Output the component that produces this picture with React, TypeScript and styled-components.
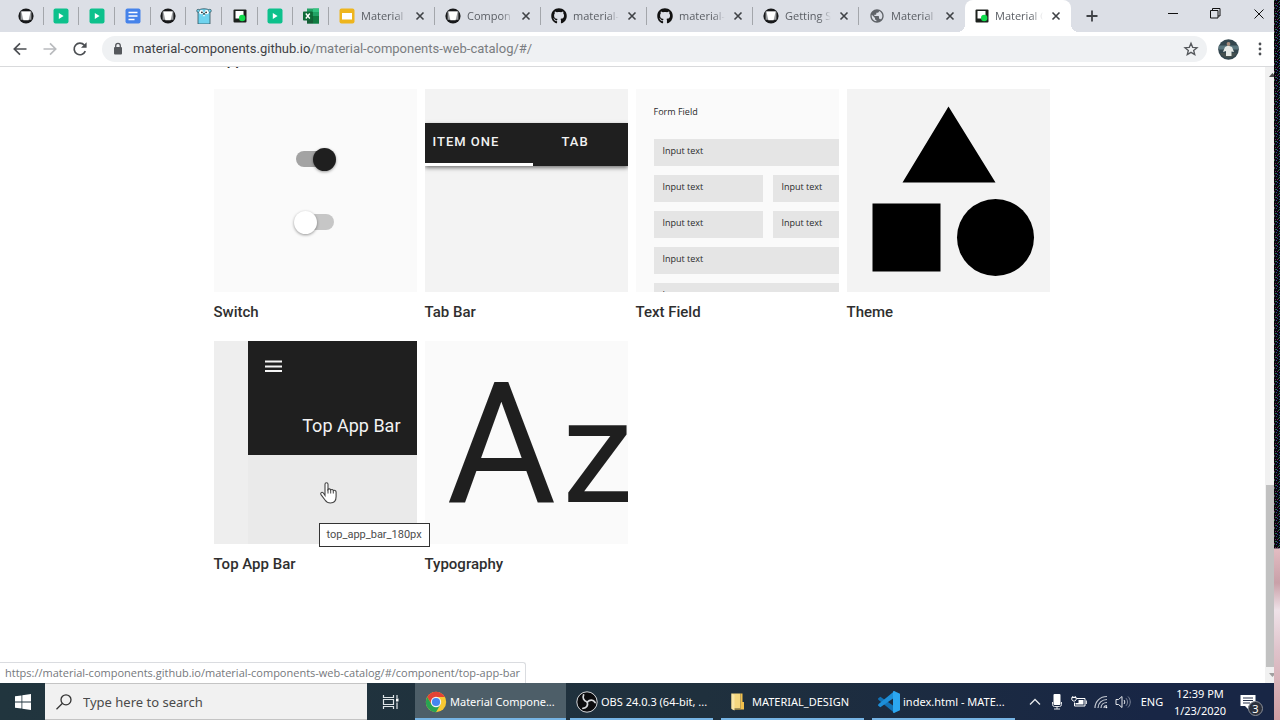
import React from "react";
import styled, { createGlobalStyle, css } from "styled-components";
import { FaGithub } from "react-icons/fa";
import { MdPublic } from "react-icons/md";

const uiFont = '"Noto Sans", "Open Sans", sans-serif';
const narrowFont = '"Open Sans", "Noto Sans", sans-serif';
const pageFont = 'Roboto, "Liberation Sans", sans-serif';

const GlobalStyle = createGlobalStyle`
  *, *::before, *::after { box-sizing: border-box; }
  html, body { margin: 0; height: 100%; }
  #root { height: 100%; }
  body { font-family: ${uiFont}; color: #202124; background: #fff; overflow: hidden; }
  button { font: inherit; color: inherit; background: none; border: 0; padding: 0; margin: 0; }
  a { color: inherit; text-decoration: none; }
  svg { display: block; flex: none; }
`;

const Desktop = styled.div`
  position: relative;
  display: flex;
  flex-direction: column;
  height: 100vh;
  overflow: hidden;
`;

/* ---------- tab strip ---------- */

const TabStrip = styled.nav`
  display: flex;
  flex: none;
  height: 32px;
  padding-left: 8px;
  background: #dcdfe6;
`;

const PinnedTabs = styled.div`
  display: grid;
  grid-template-columns: repeat(9, 1fr);
  flex: 0 0 321px;
`;

const separator = css`
  &::after {
    content: "";
    position: absolute;
    right: 0;
    top: 7px;
    width: 1px;
    height: 18px;
    background: #a3a6ab;
  }
`;

const PinnedTab = styled.button`
  position: relative;
  display: flex;
  align-items: center;
  justify-content: center;
  ${separator}
`;

const Tab = styled.div<{ $active?: boolean; $plain?: boolean }>`
  position: relative;
  display: flex;
  align-items: center;
  flex: 0 1 106px;
  min-width: 0;
  padding: 0 10px;
  ${(p) => !p.$active && !p.$plain && separator}
  ${(p) =>
    p.$active &&
    css`
      background: #fff;
      border-radius: 8px 8px 0 0;
      &::before,
      &::after {
        content: "";
        position: absolute;
        bottom: 0;
        width: 8px;
        height: 8px;
      }
      &::before {
        left: -8px;
        background: radial-gradient(circle at 0 0, transparent 8px, #fff 8px);
      }
      &::after {
        right: -8px;
        background: radial-gradient(circle at 100% 0, transparent 8px, #fff 8px);
      }
    `}
`;

const TabTitle = styled.button`
  display: flex;
  align-items: center;
  flex: 1;
  min-width: 0;
  gap: 6px;
  text-align: left;
`;

const TabText = styled.span`
  flex: 1;
  min-width: 0;
  overflow: hidden;
  white-space: nowrap;
  font-family: ${narrowFont};
  font-size: 11px;
  line-height: 16px;
  color: #5a5e64;
  mask-image: linear-gradient(90deg, #000 75%, transparent 100%);
`;

const TabClose = styled.button`
  display: flex;
  margin-left: 8px;
`;

const NewTab = styled.button`
  display: flex;
  align-items: center;
  margin-left: 14px;
`;

const WindowControls = styled.div`
  display: flex;
  margin-left: auto;
`;

const WindowButton = styled.button`
  display: flex;
  justify-content: center;
  width: 43px;
  height: 27px;
  align-items: center;
`;

/* ---------- toolbar ---------- */

const Toolbar = styled.header`
  display: flex;
  align-items: center;
  flex: none;
  height: 35px;
  padding: 0 18px 0 12px;
  background: #fff;
  border-bottom: 1px solid #d9dadc;
`;

const ToolButton = styled.button`
  display: flex;
  width: 16px;
  margin-right: 14px;
`;

const Omnibox = styled.label`
  display: flex;
  align-items: center;
  flex: 1;
  height: 26px;
  padding: 0 8px 0 10px;
  border-radius: 13px;
  background: #eff1f3;
`;

const AddressWrap = styled.span`
  position: relative;
  flex: 1;
  margin-left: 9px;
  font-family: ${pageFont};
  font-size: 13px;
  line-height: 20px;
  color: #7a7d81;
`;

const Host = styled.span`
  color: #3f4246;
`;

const AddressInput = styled.input`
  position: absolute;
  inset: 0;
  width: 100%;
  padding: 0;
  border: 0;
  outline: 0;
  background: transparent;
  font: inherit;
`;

const Avatar = styled.button`
  margin: 0 19px 0 11px;
`;

/* ---------- page ---------- */

const Viewport = styled.div`
  position: relative;
  display: flex;
  flex: 1;
  min-height: 0;
`;

const Page = styled.main`
  display: flex;
  flex-direction: column;
  justify-content: flex-end;
  flex: 1;
  overflow: hidden;
  padding: 0 26px 107px 24px;
  font-family: ${pageFont};
`;

const Catalog = styled.div`
  width: 100%;
  max-width: 836px;
  margin: 0 auto;
`;

const Grid = styled.div`
  display: grid;
  grid-template-columns: repeat(4, 1fr);
  gap: 17px 8px;
`;

const Caption = styled.span`
  display: block;
  font-size: 15px;
  font-weight: 500;
  line-height: 24px;
  color: #2f2f2f;
`;

const PreviousCaption = styled.a`
  display: block;
  margin-bottom: 17px;
`;

const CatalogItem = styled.a`
  position: relative;
  display: flex;
  flex-direction: column;
  gap: 8px;
  min-width: 0;
`;

const Tile = styled.span<{ $tone: string }>`
  display: flex;
  flex-direction: column;
  aspect-ratio: 1;
  overflow: hidden;
  background: ${(p) => p.$tone};
`;

const SwitchArt = styled.span`
  display: flex;
  flex-direction: column;
  align-items: center;
  justify-content: center;
  flex: 1;
  gap: 47px;
`;

const SwitchTrack = styled.span<{ $on?: boolean }>`
  display: flex;
  align-items: center;
  justify-content: ${(p) => (p.$on ? "flex-end" : "flex-start")};
  width: 38px;
  height: 16px;
  border-radius: 8px;
  background: ${(p) => (p.$on ? "#a3a3a3" : "#c6c6c6")};
`;

const SwitchKnob = styled.span<{ $on?: boolean }>`
  width: 23px;
  height: 23px;
  margin: 0 -2px;
  border-radius: 50%;
  background: ${(p) => (p.$on ? "#1f1f1f" : "#fff")};
  box-shadow: 0 1px 3px rgba(0, 0, 0, 0.4);
`;

const TabBarArt = styled.span`
  display: grid;
  grid-template-columns: 108px 1fr;
  height: 43px;
  margin-top: 34px;
  background: #1f1f1f;
  color: #f2f2f2;
  font-size: 13px;
  font-weight: 500;
  letter-spacing: 1px;
  line-height: 38px;
  box-shadow: 0 2px 4px rgba(0, 0, 0, 0.5);
`;

const TabBarItem = styled.span<{ $selected?: boolean }>`
  padding-left: ${(p) => (p.$selected ? "8px" : "29px")};
  border-bottom: ${(p) => (p.$selected ? "3px solid #fff" : "0")};
`;

const FormArt = styled.span`
  display: grid;
  grid-template-columns: 109px 1fr;
  grid-auto-rows: 27px;
  gap: 9px 10px;
  padding: 14px 0 0 18px;
  font-family: ${narrowFont};
  font-size: 9px;
  color: #2b2b2b;
`;

const FormTitle = styled.span`
  grid-column: 1 / -1;
  line-height: 18px;
`;

const FormField = styled.span<{ $wide?: boolean }>`
  grid-column: ${(p) => (p.$wide ? "1 / -1" : "auto")};
  padding-left: 9px;
  line-height: 23px;
  background: #e5e5e5;
`;

const AppBarArt = styled.span`
  display: flex;
  flex-direction: column;
  flex: 1;
  margin-left: 34px;
  background: #eaeaea;
`;

const AppBar = styled.span`
  display: flex;
  flex-direction: column;
  justify-content: space-between;
  height: 114px;
  padding: 16px 16px 17px;
  background: #1f1f1f;
  color: #f2f2f2;
  font-size: 18px;
  line-height: 24px;
`;

const AppBarTitle = styled.span`
  text-align: right;
`;

const TypeArt = styled.span`
  padding: 4px 0 0 22px;
  font-size: 168px;
  line-height: 200px;
  white-space: nowrap;
  color: #1f1f1f;
`;

const SmallLetter = styled.span`
  margin-left: 6px;
  font-size: 144px;
  line-height: 1;
`;

const Pointer = styled.svg`
  position: absolute;
  left: 105px;
  top: 140px;
`;

const Tooltip = styled.span`
  position: absolute;
  left: 105px;
  top: 182px;
  z-index: 1;
  padding: 0 7px;
  border: 1px solid #333;
  background: #fff;
  font-family: ${pageFont};
  font-size: 11px;
  line-height: 22px;
  white-space: nowrap;
  color: #4d4d4d;
`;

const Scrollbar = styled.div`
  display: flex;
  flex-direction: column;
  align-items: center;
  width: 15px;
  background: #f1f1f1;
`;

const ScrollArrow = styled.span`
  display: flex;
  align-items: center;
  justify-content: center;
  height: 16px;
`;

const ScrollSpace = styled.span`
  flex: 402 0 0;
`;

const ScrollThumb = styled.span`
  flex: 182 0 0;
  width: 13px;
  background: #c1c1c1;
`;

const StatusBubble = styled.div`
  position: absolute;
  left: 0;
  bottom: 0;
  height: 21px;
  padding: 0 5px;
  border: 1px solid #dadce0;
  border-width: 1px 1px 0 0;
  border-radius: 0 3px 0 0;
  background: #fff;
  font-family: ${narrowFont};
  font-size: 11px;
  line-height: 20px;
  color: #75787c;
`;

/* ---------- taskbar ---------- */

const Taskbar = styled.footer`
  display: flex;
  flex: none;
  height: 37px;
  background: linear-gradient(90deg, #21353e, #1f303d 55%, #182645 90%);
  color: #fff;
  font-size: 11px;
`;

const StartButton = styled.button`
  display: flex;
  align-items: center;
  justify-content: center;
  width: 45px;
`;

const SearchBox = styled.label`
  display: flex;
  align-items: center;
  flex: 0 1 322px;
  gap: 11px;
  padding-left: 11px;
  border: 1px solid #c4c4c4;
  border-width: 1px 0;
  background: #f1f1f1;
`;

const SearchInput = styled.input`
  flex: 1;
  min-width: 0;
  padding: 0;
  border: 0;
  outline: 0;
  background: transparent;
  font-family: ${uiFont};
  font-size: 13px;
  color: #4a4a4a;
  &::placeholder {
    color: #4a4a4a;
    opacity: 1;
  }
`;

const TaskView = styled.button`
  display: flex;
  align-items: center;
  justify-content: center;
  width: 48px;
`;

const TaskButton = styled.button<{ $active?: boolean }>`
  display: flex;
  align-items: center;
  flex: 0 1 151px;
  position: relative;
  gap: 3px;
  min-width: 0;
  padding: 0 12px 0 10px;
  white-space: nowrap;
  background: ${(p) => (p.$active ? "#4d5e68" : "transparent")};
  &::after {
    content: "";
    position: absolute;
    bottom: 0;
    left: ${(p) => (p.$active ? "0" : "4px")};
    right: ${(p) => (p.$active ? "0" : "4px")};
    height: 2px;
    background: #76b4e4;
  }
`;

const Tray = styled.div`
  display: flex;
  align-items: center;
  margin-left: auto;
`;

const TrayButton = styled.button`
  display: flex;
  align-items: center;
  justify-content: center;
  width: 22px;
  height: 100%;
`;

const Language = styled.button`
  width: 36px;
`;

const Clock = styled.time`
  width: 60px;
  text-align: center;
  line-height: 17px;
`;

const Notifications = styled.button`
  position: relative;
  display: flex;
  align-items: center;
  justify-content: center;
  width: 36px;
  height: 100%;
  margin-right: 14px;
`;

const Badge = styled.span`
  position: absolute;
  right: 3px;
  bottom: 4px;
  width: 15px;
  height: 15px;
  border: 1px solid #8b8f98;
  border-radius: 50%;
  background: #2b303c;
  font-size: 11px;
  line-height: 13px;
  text-align: center;
`;

const WallpaperEdge = styled.svg`
  position: absolute;
  right: 0;
  top: 0;
  width: 6px;
  height: 100%;
`;

/* ---------- icons ---------- */

const MaterialDisc = () => (
  <svg width="16" height="16" viewBox="0 0 16 16">
    <circle cx="8" cy="8" r="7.6" fill="#17181a" />
    <path d="M2.6 3.4h10.8v8.4H2.6z" fill="#9b9da0" />
    <path d="M3.4 3.4h9.2l-2 8.8H5.4z" fill="#fff" />
  </svg>
);

const PlayIcon = () => (
  <svg width="16" height="16" viewBox="0 0 16 16">
    <rect x=".5" y=".5" width="15" height="15" rx="2" fill="#0dc18c" />
    <path d="M5.8 5v6l4.8-3z" fill="#fff" />
  </svg>
);

const DocsIcon = () => (
  <svg width="16" height="16" viewBox="0 0 16 16">
    <rect x=".5" y=".5" width="15" height="15" rx="2" fill="#4683ea" />
    <path d="M3.5 4.5h9M3.5 8h9M3.5 11.5h6" stroke="#fff" strokeWidth="1.5" />
  </svg>
);

const GopherIcon = () => (
  <svg width="16" height="16" viewBox="0 0 16 16">
    <path d="M2 16V5C2 2 4 .8 8 .8S14 2 14 5v11z" fill="#6fd3ee" stroke="#31525c" strokeWidth=".8" />
    <circle cx="2.2" cy="2.8" r="1.5" fill="#6fd3ee" stroke="#31525c" strokeWidth=".7" />
    <circle cx="13.8" cy="2.8" r="1.5" fill="#6fd3ee" stroke="#31525c" strokeWidth=".7" />
    <circle cx="5.3" cy="4.2" r="2.1" fill="#fff" />
    <circle cx="10.7" cy="4.2" r="2.1" fill="#fff" />
    <circle cx="5.9" cy="4.3" r=".9" fill="#222" />
    <circle cx="10.1" cy="4.3" r=".9" fill="#222" />
    <ellipse cx="8" cy="6" rx="1.2" ry=".8" fill="#222" />
    <path d="M7.2 6.8h1.6v1.5H7.2z" fill="#fff" />
  </svg>
);

const CatalogIcon = () => (
  <svg width="14" height="14" viewBox="0 0 14 14">
    <rect x=".5" y=".5" width="13" height="13" rx="1" fill="#1c211d" />
    <rect x="2.5" y="2" width="8" height="7.5" fill="#fff" />
    <circle cx="9.2" cy="9" r="3.2" fill="#10dc4c" />
  </svg>
);

const ExcelIcon = () => (
  <svg width="16" height="16" viewBox="0 0 16 16">
    <path d="M4 .5h12v15H4z" fill="#23a366" />
    <path d="M4 8h6v7.5H4z" fill="#185c37" />
    <path d="M10 8h6v7.5h-6zM4 4h6v4H4z" fill="#107c41" />
    <path d="M10 .5h6V4h-6z" fill="#33c481" />
    <rect y="3.5" width="9.5" height="9" rx=".8" fill="#0f6b38" />
    <path d="M2.8 5.5l4 5M6.8 5.5l-4 5" stroke="#fff" strokeWidth="1.4" />
  </svg>
);

const SlidesIcon = () => (
  <svg width="16" height="16" viewBox="0 0 16 16">
    <rect x=".5" y=".5" width="15" height="15" rx="2" fill="#eeb51d" />
    <path d="M3 5h10v6.5H3z" fill="#fff" />
  </svg>
);

const CloseIcon = () => (
  <svg width="10" height="10" viewBox="0 0 10 10">
    <path d="M1.5 1.5l7 7M8.5 1.5l-7 7" stroke="#3f4246" strokeWidth="1.6" />
  </svg>
);

const ChromeIcon = () => (
  <svg width="22" height="22" viewBox="0 0 22 22">
    <circle cx="11" cy="11" r="10.2" fill="#f8c932" />
    <path d="M2.2 5.9A10.2 10.2 0 0 1 19.8 5.9H11L6.6 13.6z" fill="#e34335" />
    <path d="M2.2 5.9A10.2 10.2 0 0 0 11 21.2L15.4 13.5 11 11 6.6 13.5z" fill="#28a452" />
    <circle cx="11" cy="11" r="5.2" fill="#f4f4f4" />
    <circle cx="11" cy="11" r="4.1" fill="#4585ef" />
  </svg>
);

const ObsIcon = () => (
  <svg width="22" height="22" viewBox="0 0 22 22">
    <circle cx="11" cy="11" r="10.2" fill="#0c0c0e" stroke="#d5d7da" strokeWidth="1" />
    <g fill="none" stroke="#d5d7da" strokeWidth="1.7" strokeLinecap="round">
      <path d="M11.3 11C7.6 10 6.3 7 7.6 3.9" />
      <path d="M11.3 11c2.7-2.7 6-2.4 7.8.5" />
      <path d="M11.3 11c1 3.7-.9 6.3-4.4 6.4" />
    </g>
  </svg>
);

const FolderIcon = () => (
  <svg width="22" height="22" viewBox="0 0 22 22">
    <path d="M4.5 2.5h9v15h-9z" fill="#f5d77f" />
    <path d="M13.5 2.5h2V11H17v7.5H6.5l-2-.8h9z" fill="#f0bf4c" />
    <path d="M4.5 2.5l3 1.5v15.5l-3-1.5z" fill="#fae6a5" />
  </svg>
);

const CodeIcon = () => (
  <svg width="22" height="22" viewBox="0 0 22 22">
    <path d="M0 7.5l2.3-1.8L16.5 15.5V22L.3 8.8z" fill="#1272b5" />
    <path d="M0 14.5l2.3 1.8L16.5 6.5V0L.3 13.2z" fill="#1d8fd8" />
    <path d="M16 0l6 2.7v16.6L16 22l-1-.5V.5z" fill="#2ba7f1" />
  </svg>
);

const pinned = [
  { name: "Material", icon: <MaterialDisc /> },
  { name: "Video", icon: <PlayIcon /> },
  { name: "Video", icon: <PlayIcon /> },
  { name: "Docs", icon: <DocsIcon /> },
  { name: "Material", icon: <MaterialDisc /> },
  { name: "Go", icon: <GopherIcon /> },
  { name: "Catalog", icon: <CatalogIcon /> },
  { name: "Video", icon: <PlayIcon /> },
  { name: "Excel", icon: <ExcelIcon /> },
];

const tabs = [
  { title: "Material D", icon: <SlidesIcon /> },
  { title: "Compon", icon: <MaterialDisc /> },
  { title: "material-", icon: <FaGithub size={16} color="#111" /> },
  { title: "material-", icon: <FaGithub size={16} color="#111" /> },
  { title: "Getting S", icon: <MaterialDisc /> },
  { title: "Material", icon: <MdPublic size={16} color="#5f6368" /> },
  { title: "Material C", icon: <CatalogIcon /> },
];

const tasks = [
  { title: "Material Compone...", icon: <ChromeIcon /> },
  { title: "OBS 24.0.3 (64-bit, ...", icon: <ObsIcon /> },
  { title: "MATERIAL_DESIGN", icon: <FolderIcon /> },
  { title: "index.html - MATE...", icon: <CodeIcon /> },
];

function BrowserTabs() {
  return (
    <TabStrip>
      <PinnedTabs>
        {pinned.map((tab, i) => (
          <PinnedTab key={i} aria-label={tab.name}>
            {tab.icon}
          </PinnedTab>
        ))}
      </PinnedTabs>
      {tabs.map((tab, i) => (
        <Tab key={i} $active={i === tabs.length - 1} $plain={i === tabs.length - 2}>
          <TabTitle>
            {tab.icon}
            <TabText>{tab.title}</TabText>
          </TabTitle>
          <TabClose aria-label="Close tab">
            <CloseIcon />
          </TabClose>
        </Tab>
      ))}
      <NewTab aria-label="New tab">
        <svg width="14" height="14" viewBox="0 0 14 14">
          <path d="M7 1.5v11M1.5 7h11" stroke="#3f4246" strokeWidth="1.8" />
        </svg>
      </NewTab>
      <WindowControls>
        <WindowButton aria-label="Minimize">
          <svg width="10" height="10" viewBox="0 0 10 10">
            <path d="M0 4.5h10" stroke="#111" />
          </svg>
        </WindowButton>
        <WindowButton aria-label="Restore">
          <svg width="11" height="11" viewBox="0 0 11 11" fill="none" stroke="#111">
            <path d="M.5 2.5H8V10H.5zM2.5 2.5v-2H10V8H8" />
          </svg>
        </WindowButton>
        <WindowButton aria-label="Close">
          <svg width="10" height="10" viewBox="0 0 10 10">
            <path d="M.5.5l9 9M9.5.5l-9 9" stroke="#111" />
          </svg>
        </WindowButton>
      </WindowControls>
    </TabStrip>
  );
}

function BrowserToolbar() {
  return (
    <Toolbar>
      <ToolButton aria-label="Back">
        <svg width="16" height="16" viewBox="0 0 16 16" fill="none" stroke="#4b4e52" strokeWidth="1.7">
          <path d="M14.5 8H3M8 2.3L2.3 8 8 13.7" />
        </svg>
      </ToolButton>
      <ToolButton aria-label="Forward">
        <svg width="16" height="16" viewBox="0 0 16 16" fill="none" stroke="#b9bbbe" strokeWidth="1.7">
          <path d="M1.5 8H13M8 2.3L13.7 8 8 13.7" />
        </svg>
      </ToolButton>
      <ToolButton aria-label="Reload">
        <svg width="16" height="16" viewBox="0 0 16 16">
          <path d="M13.3 10.2A5.8 5.8 0 1 1 12.3 4.1" fill="none" stroke="#4b4e52" strokeWidth="1.7" />
          <path d="M14.6 1.2v5.6H9z" fill="#4b4e52" />
        </svg>
      </ToolButton>
      <Omnibox>
        <svg width="12" height="14" viewBox="0 0 12 14">
          <rect x="2" y="5" width="8" height="7.5" rx="1" fill="#55585c" />
          <path d="M3.7 5.5V3.7a2.3 2.3 0 0 1 4.6 0v1.8" fill="none" stroke="#55585c" strokeWidth="1.3" />
        </svg>
        <AddressWrap>
          <Host>material-components.github.io</Host>/material-components-web-catalog/#/
          <AddressInput aria-label="Address" />
        </AddressWrap>
        <svg width="16" height="16" viewBox="0 0 24 24" fill="none" stroke="#55585c" strokeWidth="2">
          <path d="M12 3.5l2.5 6 6.5.5-5 4.2 1.6 6.3L12 17l-5.6 3.500L8 14.200 3 10l6.500-.5z" />
        </svg>
      </Omnibox>
      <Avatar aria-label="Profile">
        <svg width="21" height="21" viewBox="0 0 21 21">
          <circle cx="10.5" cy="10.5" r="10.3" fill="#33464e" />
          <path d="M1 6.5h19l.5 4H.5z" fill="#5a777f" />
          <path d="M2 14h17a10 10 0 0 1-17 0z" fill="#46504f" />
          <path d="M7 8l3-1.5 4 1.5 2 5-2.5-.5V17H8v-5l-3 1z" fill="#e5e9e6" />
          <circle cx="10.5" cy="5" r="1.9" fill="#a88d7c" />
        </svg>
      </Avatar>
      <button aria-label="Menu">
        <svg width="4" height="14" viewBox="0 0 4 14" fill="#4b4e52">
          <circle cx="2" cy="2" r="1.4" />
          <circle cx="2" cy="7" r="1.4" />
          <circle cx="2" cy="12" r="1.4" />
        </svg>
      </button>
    </Toolbar>
  );
}

function CatalogPage() {
  return (
    <Page>
      <Catalog>
        <PreviousCaption href="#/component/ripple">
          <Caption>Ripple</Caption>
        </PreviousCaption>
        <Grid>
          <CatalogItem href="#/component/switch">
            <Tile $tone="#fafafa">
              <SwitchArt>
                <SwitchTrack $on>
                  <SwitchKnob $on />
                </SwitchTrack>
                <SwitchTrack>
                  <SwitchKnob />
                </SwitchTrack>
              </SwitchArt>
            </Tile>
            <Caption>Switch</Caption>
          </CatalogItem>
          <CatalogItem href="#/component/tabs">
            <Tile $tone="#f3f3f3">
              <TabBarArt>
                <TabBarItem $selected>ITEM ONE</TabBarItem>
                <TabBarItem>TAB</TabBarItem>
              </TabBarArt>
            </Tile>
            <Caption>Tab Bar</Caption>
          </CatalogItem>
          <CatalogItem href="#/component/text-field">
            <Tile $tone="#fafafa">
              <FormArt>
                <FormTitle>Form Field</FormTitle>
                <FormField $wide>Input text</FormField>
                <FormField>Input text</FormField>
                <FormField>Input text</FormField>
                <FormField>Input text</FormField>
                <FormField>Input text</FormField>
                <FormField $wide>Input text</FormField>
                <FormField $wide>Input text</FormField>
              </FormArt>
            </Tile>
            <Caption>Text Field</Caption>
          </CatalogItem>
          <CatalogItem href="#/component/theme">
            <Tile $tone="#f3f3f3">
              <svg width="100%" height="100%" viewBox="0 0 203 203">
                <path d="M101.5 17.5l47 76h-93zM25.5 114.5h68v68h-68z" />
                <circle cx="148.5" cy="148.5" r="38.5" />
              </svg>
            </Tile>
            <Caption>Theme</Caption>
          </CatalogItem>
          <CatalogItem href="#/component/top-app-bar">
            <Tile $tone="#eeeeee">
              <AppBarArt>
                <AppBar>
                  <svg width="18" height="18" viewBox="0 0 18 18">
                    <path d="M1 4.5h17M1 9.5h17M1 14h17" stroke="#f5f5f5" strokeWidth="1.8" />
                  </svg>
                  <AppBarTitle>Top App Bar</AppBarTitle>
                </AppBar>
              </AppBarArt>
            </Tile>
            <Caption>Top App Bar</Caption>
            <Pointer width="20" height="24" viewBox="0 0 20 24">
              <path
                d="M6 14.5V3.2c0-2 3-2 3 0v5.3c.6-1 2.4-.8 2.7.4.8-.8 2.4-.4 2.6.7 1-.7 2.8-.1 2.8 1.5v4.5c0 4-2.2 6.4-5.6 6.4-2.7 0-4.3-1.2-5.5-3L2 13.6c-1-1.7.8-3 2.2-1.8z"
                fill="#fff"
                stroke="#444"
                strokeWidth="1.1"
              />
              <path d="M9 8v4.5M11.7 9v3.5M14.3 9.8v2.7" stroke="#444" />
            </Pointer>
            <Tooltip role="tooltip">top_app_bar_180px</Tooltip>
          </CatalogItem>
          <CatalogItem href="#/component/typography">
            <Tile $tone="#fafafa">
              <TypeArt>
                A<SmallLetter>z</SmallLetter>
              </TypeArt>
            </Tile>
            <Caption>Typography</Caption>
          </CatalogItem>
        </Grid>
      </Catalog>
    </Page>
  );
}

function WindowsTaskbar() {
  return (
    <Taskbar>
      <StartButton aria-label="Start">
        <svg width="16" height="16" viewBox="0 0 16 16" fill="#fff">
          <path d="M0 2.3l6.500-.9v6.200H0zM7.300 1.300L16 0v7.600H7.300zM0 8.400h6.500v6.200L0 13.700zM7.300 8.400H16V16l-8.700-1.300z" />
        </svg>
      </StartButton>
      <SearchBox>
        <svg width="16" height="16" viewBox="0 0 16 16" fill="none" stroke="#333" strokeWidth="1.3">
          <circle cx="10" cy="5.8" r="5" />
          <path d="M6.5 9.3l-6 6" />
        </svg>
        <SearchInput aria-label="Search" placeholder="Type here to search" />
      </SearchBox>
      <TaskView aria-label="Task view">
        <svg width="18" height="16" viewBox="0 0 18 16" fill="none" stroke="#dfe5e8" strokeWidth="1.2">
          <path d="M1.5 1v2.5h10V1M1.5 15v-2.5h10V15M1.5 5.5h10v5h-10zM15 1v3M15 8.5V15" />
          <path d="M14 4.5h2.5v3H14z" fill="#fff" stroke="none" />
        </svg>
      </TaskView>
      {tasks.map((task, i) => (
        <TaskButton key={task.title} $active={i === 0}>
          {task.icon}
          {task.title}
        </TaskButton>
      ))}
      <Tray>
        <TrayButton aria-label="Show hidden icons">
          <svg width="12" height="8" viewBox="0 0 12 8">
            <path d="M1 6.5l5-5 5 5" fill="none" stroke="#e6e8ec" strokeWidth="1.3" />
          </svg>
        </TrayButton>
        <TrayButton aria-label="Microphone">
          <svg width="12" height="16" viewBox="0 0 12 16">
            <rect x="2.5" y="0" width="7" height="11" rx="1" fill="#fff" />
            <path d="M1.5 8v2.5a2 2 0 0 0 2 2h5a2 2 0 0 0 2-2V8M6 12.5V15M3 15h6" fill="none" stroke="#dfe2e8" />
          </svg>
        </TrayButton>
        <TrayButton aria-label="Battery">
          <svg width="16" height="12" viewBox="0 0 16 12">
            <path d="M5.5 2.5H14V10H3.5V6.5M15.3 4.5V8" fill="none" stroke="#fff" />
            <path d="M7.5 4h5v4.5h-8V7h3z" fill="#fff" />
            <path d="M.8 1.5h4.4v2.2L3.8 5H2.2L.8 3.7zM1.8 0v2M4.2 0v2" fill="none" stroke="#fff" />
          </svg>
        </TrayButton>
        <TrayButton aria-label="Network">
          <svg width="14" height="14" viewBox="0 0 14 14" fill="none" stroke="#c3c8d1" strokeWidth="1.2">
            <path d="M1 13C1 6.5 6 1.5 13 1.5M4 13c0-5 4-8.5 9-8.5M7 13c0-3.3 2.7-5.5 6-5.5M10 13c0-1.7 1.3-2.5 3-2.5" />
            <circle cx="12.3" cy="12.3" r="1" fill="#fff" stroke="none" />
          </svg>
        </TrayButton>
        <TrayButton aria-label="Volume">
          <svg width="16" height="14" viewBox="0 0 16 14" fill="none" stroke="#e6e8ec">
            <path d="M1 4.5h2.5L7 1.5v11l-3.5-3H1z" />
            <path d="M9 5c1 1.2 1 2.8 0 4" />
            <path d="M11 3.2c2 2.2 2 5.4 0 7.6M13 1.5c3 3.2 3 7.8 0 11" stroke="#7c8599" />
          </svg>
        </TrayButton>
        <Language>ENG</Language>
        <Clock>
          12:39 PM
          <br />
          1/23/2020
        </Clock>
        <Notifications aria-label="Notifications, 3 new">
          <svg width="16" height="16" viewBox="0 0 16 16">
            <path d="M.5 1h15v11h-7v3.5L5 12H.5z" fill="#fff" />
            <path d="M3 4h10M3 6.5h10M3 9h7" stroke="#26304a" />
          </svg>
          <Badge>3</Badge>
        </Notifications>
      </Tray>
    </Taskbar>
  );
}

function WallpaperSliver() {
  return (
    <WallpaperEdge aria-hidden="true">
      <defs>
        <pattern id="speckle" width="6" height="8" patternUnits="userSpaceOnUse">
          <rect width="6" height="8" fill="#07070c" />
          <path d="M0 .5h1M4 2.5h1M1 5.5h1" stroke="#2b6a3c" />
          <path d="M2 .5h1M5 4.5h1M3 6.5h1" stroke="#3a3a98" />
          <path d="M1 3.5h1M3 3.5h1M0 7.5h1" stroke="#6a2b62" />
          <path d="M5 1.5h1M2 5.5h1M5 7.5h1" stroke="#2c6572" />
        </pattern>
        <linearGradient id="skin" x1="0" y1="0" x2="0" y2="1">
          <stop offset="0" stopColor="#e3bcc2" />
          <stop offset=".2" stopColor="#c9a0a8" />
          <stop offset=".36" stopColor="#efe2e8" />
          <stop offset=".6" stopColor="#dfc2ca" />
          <stop offset="1" stopColor="#cf9da2" />
        </linearGradient>
      </defs>
      <rect width="6" height="76.2%" fill="url(#speckle)" />
      <rect y="76.2%" width="6" height="23.8%" fill="url(#skin)" />
    </WallpaperEdge>
  );
}

export default function App() {
  return (
    <Desktop>
      <GlobalStyle />
      <BrowserTabs />
      <BrowserToolbar />
      <Viewport>
        <CatalogPage />
        <Scrollbar aria-hidden="true">
          <ScrollArrow>
            <svg width="7" height="4" viewBox="0 0 7 4">
              <path d="M0 4h7L3.5 0z" fill="#505050" />
            </svg>
          </ScrollArrow>
          <ScrollSpace />
          <ScrollThumb />
          <ScrollArrow>
            <svg width="7" height="4" viewBox="0 0 7 4">
              <path d="M0 0h7L3.5 4z" fill="#a0a0a0" />
            </svg>
          </ScrollArrow>
        </Scrollbar>
        <StatusBubble>https://material-components.github.io/material-components-web-catalog/#/component/top-app-bar</StatusBubble>
      </Viewport>
      <WindowsTaskbar />
      <WallpaperSliver />
    </Desktop>
  );
}
